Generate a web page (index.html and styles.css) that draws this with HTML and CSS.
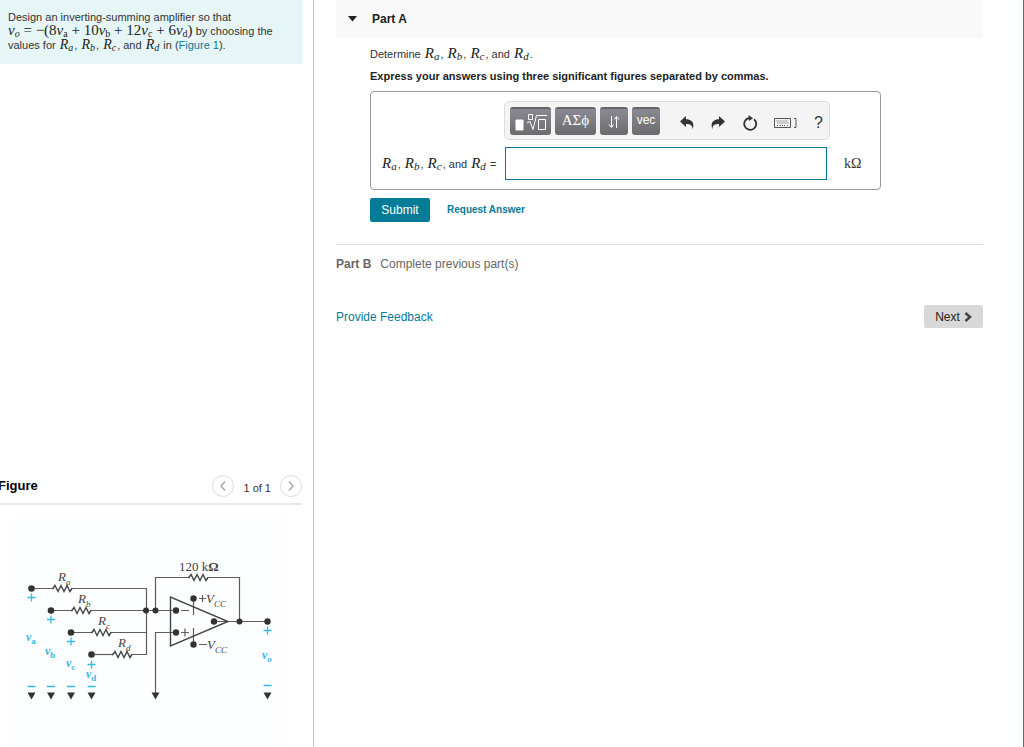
FILE: index.html
```html
<!DOCTYPE html>
<html lang="en">
<head>
    <meta charset="UTF-8">
    <meta name="viewport" content="width=device-width, initial-scale=1.0">
    <title>Inverting-Summing Amplifier</title>
    <link rel="stylesheet" href="styles.css">
</head>
<body>
    <div class="page">
        <aside class="sidebar">
            <div class="problem">
                Design an inverting-summing amplifier so that<br>
                <span class="math equation"><i>v<sub>o</sub></i> = −(8<i>v</i><sub>a</sub> + 10<i>v</i><sub>b</sub> + 12<i>v</i><sub>c</sub> + 6<i>v</i><sub>d</sub>)</span> by choosing the<br>
                values for <i class="math">R<sub>a</sub></i>, <i class="math">R<sub>b</sub></i>, <i class="math">R<sub>c</sub></i>, and <i class="math">R<sub>d</sub></i> in (<a href="#figure">Figure 1</a>).
            </div>

            <section class="figure" id="figure">
                <div class="figure-header">
                    <h2>Figure</h2>
                    <div class="pager">
                        <button type="button" class="pager-button" aria-label="Previous figure">
                            <svg width="8" height="12" viewBox="0 0 8 12"><path d="M6 1.5 2 6l4 4.5"/></svg>
                        </button>
                        <span>1 of 1</span>
                        <button type="button" class="pager-button" aria-label="Next figure">
                            <svg width="8" height="12" viewBox="0 0 8 12"><path d="M2 1.5 6 6l-4 4.5"/></svg>
                        </button>
                    </div>
                </div>
                <svg class="circuit" width="274" height="230" viewBox="12 517 274 230">
                    <!-- wires -->
                    <g class="wire">
                        <path d="M31 588.500H53M71 588.500H146.500V654.500H131"/>
                        <path d="M51 610.500H72M90 610.500H176"/>
                        <path d="M71 632.500H92M110 632.500H146"/>
                        <path d="M92 654.500H113"/>
                        <path d="M155.500 610V577.500H189M207 577.500H239.500V621"/>
                        <path d="M176 632.500H155.500V693"/>
                        <path d="M214 621.500H267"/>
                        <path d="M193.500 598V615M193.500 628V645"/>
                    </g>
                    <!-- resistors -->
                    <g class="resistor">
                        <path d="M52 588.500h1l2-3 3 6 3-6 3 6 3-6 3 6 2-3"/>
                        <path d="M71 610.500h1l2-3 3 6 3-6 3 6 3-6 3 6 2-3"/>
                        <path d="M91 632.500h1l2-3 3 6 3-6 3 6 3-6 3 6 2-3"/>
                        <path d="M112 654.500h1l2-3 3 6 3-6 3 6 3-6 3 6 2-3"/>
                        <path d="M188 577.500h1l2-3 3 6 3-6 3 6 3-6 3 6 2-3"/>
                    </g>
                    <path class="amp" d="M170.500 597V646L228 621.500Z"/>
                    <!-- nodes -->
                    <g class="node">
                        <circle cx="31.500" cy="588.500" r="3.300"/>
                        <circle cx="51" cy="610.500" r="3.300"/>
                        <circle cx="71" cy="632.500" r="3.300"/>
                        <circle cx="91.500" cy="654.500" r="3.300"/>
                        <circle cx="146" cy="610.500" r="3"/>
                        <circle cx="155.500" cy="610.500" r="3"/>
                        <circle cx="176" cy="610.500" r="3.200"/>
                        <circle cx="176" cy="632.500" r="3.200"/>
                        <circle cx="193.500" cy="598.500" r="3.200"/>
                        <circle cx="193.500" cy="644.500" r="3.200"/>
                        <circle cx="214" cy="621.500" r="3.200"/>
                        <circle cx="239.500" cy="621.500" r="3"/>
                        <circle cx="267.500" cy="621.500" r="3.200"/>
                        <path d="M27.500 692.500h8l-4 7zM47 692.500h8l-4 7zM67 692.500h8l-4 7zM87.500 692.500h8l-4 7zM151.500 692.500h8l-4 7zM263.500 692.500h8l-4 7z"/>
                    </g>
                    <!-- polarity marks -->
                    <path class="sign minus-plus" d="M47 619.500h8m-4-4v8M67 641.500h8m-4-4v8M87.500 664.500h8m-4-4v8M263.500 630.500h8m-4-4v8M27.500 686.500h8M47 686.500h8M67 686.500h8M87.500 686.500h8M263.500 685.500h8M27.500 597.500h8m-4-4v8"/>
                    <path class="wire" d="M181 610.500h8M181 632.500h8m-4-4v8M199 598.500h7m-3.500-3.500v7M199 644.500h8"/>
                    <!-- labels -->
                    <g class="label">
                        <text x="179" y="571">120 k<tspan font-weight="bold">Ω</tspan></text>
                        <text x="58" y="581" font-style="italic">R<tspan class="small" dy="4">a</tspan></text>
                        <text x="78" y="603" font-style="italic">R<tspan class="small" dy="4">b</tspan></text>
                        <text x="98" y="625" font-style="italic">R<tspan class="small" dy="4">c</tspan></text>
                        <text x="118" y="647" font-style="italic">R<tspan class="small" dy="4">d</tspan></text>
                        <text x="206" y="603" font-style="italic">V<tspan class="small" dy="4">CC</tspan></text>
                        <text x="207" y="649" font-style="italic">V<tspan class="small" dy="4">CC</tspan></text>
                    </g>
                    <g class="voltage">
                        <text x="26" y="641"><tspan font-style="italic">v</tspan><tspan class="small" dy="3">a</tspan></text>
                        <text x="45" y="655"><tspan font-style="italic">v</tspan><tspan class="small" dy="3">b</tspan></text>
                        <text x="66" y="667"><tspan font-style="italic">v</tspan><tspan class="small" dy="3">c</tspan></text>
                        <text x="86" y="678"><tspan font-style="italic">v</tspan><tspan class="small" dy="3">d</tspan></text>
                        <text x="262" y="659" font-style="italic">v<tspan class="small" dy="3">o</tspan></text>
                    </g>
                </svg>
            </section>
        </aside>

        <main class="content">
            <div class="part-header">
                <svg class="caret" width="9" height="6" viewBox="0 0 9 6"><path d="M0 0h9L4.500 5.500z"/></svg>
                <h1>Part A</h1>
            </div>

            <form class="part-body">
                <p class="question">Determine <i class="math">R<sub>a</sub></i>, <i class="math">R<sub>b</sub></i>, <i class="math">R<sub>c</sub></i>, and <i class="math">R<sub>d</sub></i>.</p>
                <p class="instructions">Express your answers using three significant figures separated by commas.</p>

                <div class="answer-box">
                    <div class="toolbar">
                        <button type="button" class="tool wide" aria-label="Templates">
                            <svg width="32" height="20" viewBox="0 0 32 20">
                                <path class="fill" d="M1 8h7v10H1z"/>
                                <path d="M13.500 2.500h4v5h-4zM12 11l3-1.500 3 8 3.500-14H32M23.500 7.500h7v10h-7z"/>
                            </svg>
                        </button>
                        <button type="button" class="tool wide greek">ΑΣϕ</button>
                        <button type="button" class="tool" aria-label="Arrows">
                            <svg width="12" height="14" viewBox="0 0 12 14"><path d="M3.500 1v11M1 9.500l2.500 3 2-3M8.500 13V2M6.500 4.500l2-3 2.500 3"/></svg>
                        </button>
                        <button type="button" class="tool vec">vec</button>
                        <div class="icons">
                            <button type="button" class="icon" aria-label="Undo">
                                <svg width="14" height="14" viewBox="0 0 14 14"><path class="solid" d="M0 5.500 6 0v3.200c6 0 9 4 6.500 10.300.3-4-2-5.500-6.500-5.500V11z"/></svg>
                            </button>
                            <button type="button" class="icon" aria-label="Redo">
                                <svg width="14" height="14" viewBox="0 0 14 14"><path class="solid" d="M14 5.500 8 0v3.200C2 3.200-1 7.200 1.500 13.500 1.200 9.500 3.500 8 8 8V11z"/></svg>
                            </button>
                            <button type="button" class="icon" aria-label="Reset">
                                <svg width="16" height="16" viewBox="0 0 16 16"><path class="line" d="M12 4.200A6 6 0 1 1 7 3"/><path class="solid" d="M6.500 0 11 3.200 7 6z"/></svg>
                            </button>
                            <button type="button" class="icon keyboard" aria-label="Keyboard">
                                <svg width="23" height="12" viewBox="0 0 23 12">
                                    <path class="frame" d="M.5 1.500h16v9H.5zM20 1.500h2v9h-2"/>
                                    <path class="keys" d="M2.500 4h12M3.500 6h12M3 8.500h2m1 0h6m1 0h2"/>
                                </svg>
                            </button>
                            <button type="button" class="icon help" aria-label="Help">?</button>
                        </div>
                    </div>
                    <label for="answer"><i class="math">R<sub>a</sub></i>, <i class="math">R<sub>b</sub></i>, <i class="math">R<sub>c</sub></i>, and <i class="math">R<sub>d</sub></i> =</label>
                    <input type="text" id="answer">
                    <span class="unit">kΩ</span>
                </div>

                <div class="actions">
                    <button type="submit" class="submit">Submit</button>
                    <a href="#">Request Answer</a>
                </div>
            </form>

            <div class="part-b"><strong>Part B</strong> <span>Complete previous part(s)</span></div>

            <div class="bottom">
                <a href="#">Provide Feedback</a>
                <button type="button" class="next">Next
                    <svg width="8" height="10" viewBox="0 0 8 10"><path d="M1.500 1 6 5l-4.500 4"/></svg>
                </button>
            </div>
        </main>
    </div>
</body>
</html>
```
FILE: styles.css
```css
* {
    box-sizing: border-box;
}

body {
    margin: 0;
    font-family: "Liberation Sans", Arial, sans-serif;
    font-size: 11px;
    line-height: 14px;
    color: #333;
    background: #fff;
}

h1, h2, p {
    margin: 0;
}

a {
    color: #047b97;
    text-decoration: none;
}

button {
    font-family: inherit;
    padding: 0;
    border: 0;
    display: flex;
    align-items: center;
    justify-content: center;
}

.page {
    display: flex;
    min-height: 100vh;
}

/* Left side */
.sidebar {
    flex: 0 0 314px;
    display: flex;
    flex-direction: column;
    padding-right: 11px;
    border-right: 1px solid #c3c9d3;
    overflow: hidden;
}

.problem {
    padding: 10px 8px 12px;
    background: #e6f6f7;
    white-space: nowrap;
}

.math {
    font-family: "Liberation Serif", "Times New Roman", serif;
    font-size: 15px;
    line-height: 0;
    padding: 0 1px;
    color: #222;
}

.math sub {
    font-size: 11px;
    line-height: 0;
    vertical-align: -2px;
}

.problem .math {
    font-size: 14px;
}

.problem .math sub {
    font-size: 10px;
}

.problem .equation {
    padding: 0;
    font-size: 15px;
}

.figure {
    margin-top: auto;
}

.figure-header {
    display: flex;
    justify-content: space-between;
    align-items: center;
    height: 36px;
    margin-bottom: 12px;
    border-bottom: 2px solid #e9e9e9;
}

.figure-header h2 {
    margin-left: -2px;
    font-size: 13px;
    color: #000;
}

.pager {
    display: flex;
    align-items: center;
    gap: 9px;
}

.pager span {
    padding-top: 4px;
}

.pager-button {
    width: 22px;
    height: 22px;
    border: 1px solid #ddd;
    border-radius: 50%;
    background: #fff;
}

.pager-button path {
    fill: none;
    stroke: #aaa;
    stroke-width: 1.5;
}

/* Circuit drawing */
.circuit {
    display: block;
    margin-left: 12px;
    background: #fcfeff;
    font-family: "Liberation Serif", serif;
}

.wire {
    fill: none;
    stroke: #655b5b;
    stroke-width: 1.2;
}

.resistor {
    fill: none;
    stroke: #444;
    stroke-width: 1.4;
}

.amp {
    fill: none;
    stroke: #444;
    stroke-width: 1.4;
}

.node {
    fill: #333;
}

.sign {
    stroke: #35b9e8;
    stroke-width: 1.3;
}

.label {
    font-size: 13px;
    fill: #444;
}

.voltage {
    font-size: 12px;
    font-weight: bold;
    fill: #35b9e8;
}

.small {
    font-size: 9px;
}

/* Right side */
.content {
    flex: 1;
    min-width: 0;
    padding: 0 40px 0 22px;
    border-right: 1px solid #1d76c4;
}

.part-header {
    display: flex;
    align-items: center;
    gap: 15px;
    height: 38px;
    padding-left: 12px;
    background: #f9f9f9;
}

.part-header h1 {
    font-size: 12px;
    color: #222;
}

.caret {
    fill: #222;
}

.part-body {
    padding: 9px 0 22px 34px;
    border-bottom: 1px solid #ddd;
}

.instructions {
    margin-top: 8px;
    font-weight: bold;
    color: #222;
}

.answer-box {
    display: grid;
    grid-template-columns: 124px 322px auto;
    align-items: center;
    row-gap: 7px;
    max-width: 511px;
    margin-top: 8px;
    padding: 9px 10px;
    border: 1px solid #999;
    border-radius: 4px;
}

.toolbar {
    grid-column: 2 / 4;
    width: 326px;
    height: 39px;
    margin-left: -1px;
    display: flex;
    align-items: center;
    gap: 4px;
    padding-left: 5px;
    border: 1px solid #ddd;
    border-radius: 5px;
    background: #f4f4f4;
}

.tool {
    width: 28px;
    height: 28px;
    border-radius: 3px;
    border-top: 2px solid #666;
    background: linear-gradient(#8b8a93, #6c6c6e);
    color: #fff;
}

.tool.wide {
    width: 41px;
}

.tool path {
    fill: none;
    stroke: #fff;
}

.tool .fill {
    fill: #fff;
}

.greek {
    font-family: "Liberation Serif", serif;
    font-size: 15px;
    padding-bottom: 3px;
}

.vec {
    font-size: 12px;
    padding-bottom: 4px;
}

.icons {
    display: flex;
    flex: 1;
    align-items: center;
    justify-content: space-between;
    padding: 4px 6px 0 16px;
}

.icon {
    background: none;
    color: #333;
}

.icon .solid {
    fill: #333;
}

.icon .line {
    fill: none;
    stroke: #333;
    stroke-width: 1.8;
}

.frame, .keys {
    fill: none;
    stroke: #555;
}

.keys {
    stroke-dasharray: 1 1;
}

.help {
    font-size: 16px;
}

.answer-box label {
    grid-column: 1;
    white-space: nowrap;
}

.answer-box input {
    height: 33px;
    border: 1px solid #047b97;
    border-radius: 0;
    padding: 4px 8px;
    font: inherit;
}

.unit {
    padding-left: 17px;
    font-family: "Liberation Serif", serif;
    font-size: 14px;
}

.actions {
    display: flex;
    align-items: center;
    gap: 17px;
    margin-top: 8px;
}

.actions a {
    font-size: 10px;
    font-weight: bold;
}

.submit {
    width: 60px;
    height: 24px;
    border-radius: 2px;
    background: #047b97;
    color: #fff;
    font-size: 12px;
}

.part-b {
    display: flex;
    gap: 9px;
    margin-top: 12px;
    font-size: 12px;
    color: #666;
}

.bottom {
    display: flex;
    justify-content: space-between;
    align-items: center;
    margin-top: 34px;
    font-size: 12px;
}

.next {
    width: 59px;
    height: 23px;
    gap: 4px;
    border-radius: 2px;
    background: #d8d8d8;
    color: #222;
    font-size: 12px;
}

.next path {
    fill: none;
    stroke: #444;
    stroke-width: 2.5;
}
```
